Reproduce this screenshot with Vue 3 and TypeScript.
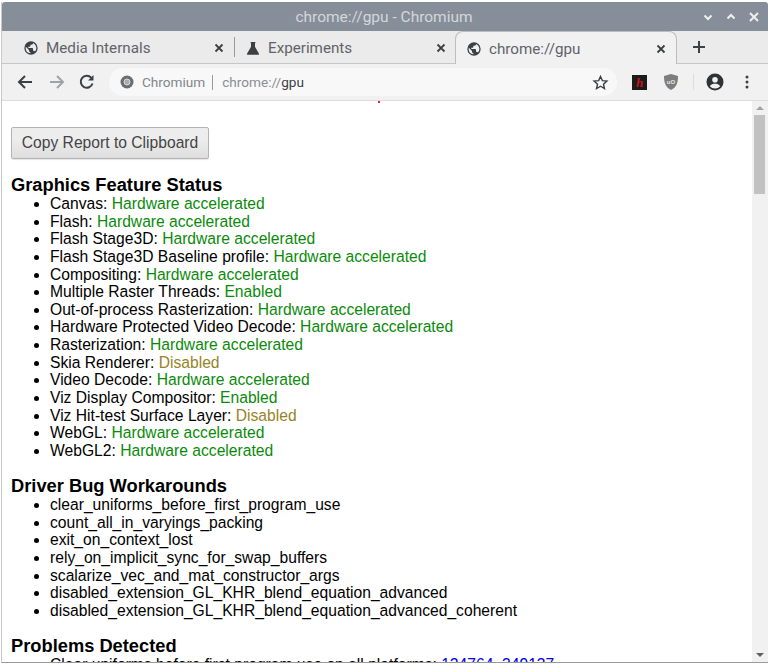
<script setup lang="ts">
interface Feature { name: string; status: string; off?: boolean }
const features: Feature[] = [
  { name: 'Canvas', status: 'Hardware accelerated' },
  { name: 'Flash', status: 'Hardware accelerated' },
  { name: 'Flash Stage3D', status: 'Hardware accelerated' },
  { name: 'Flash Stage3D Baseline profile', status: 'Hardware accelerated' },
  { name: 'Compositing', status: 'Hardware accelerated' },
  { name: 'Multiple Raster Threads', status: 'Enabled' },
  { name: 'Out-of-process Rasterization', status: 'Hardware accelerated' },
  { name: 'Hardware Protected Video Decode', status: 'Hardware accelerated' },
  { name: 'Rasterization', status: 'Hardware accelerated' },
  { name: 'Skia Renderer', status: 'Disabled', off: true },
  { name: 'Video Decode', status: 'Hardware accelerated' },
  { name: 'Viz Display Compositor', status: 'Enabled' },
  { name: 'Viz Hit-test Surface Layer', status: 'Disabled', off: true },
  { name: 'WebGL', status: 'Hardware accelerated' },
  { name: 'WebGL2', status: 'Hardware accelerated' },
]
const workarounds = [
  'clear_uniforms_before_first_program_use',
  'count_all_in_varyings_packing',
  'exit_on_context_lost',
  'rely_on_implicit_sync_for_swap_buffers',
  'scalarize_vec_and_mat_constructor_args',
  'disabled_extension_GL_KHR_blend_equation_advanced',
  'disabled_extension_GL_KHR_blend_equation_advanced_coherent',
]
const tabs = [
  { title: 'Media Internals', icon: 'globe' },
  { title: 'Experiments', icon: 'flask' },
  { title: 'chrome://gpu', icon: 'globe', active: true },
]
</script>

<template>
  <div class="screen">
    <div class="window">
      <header class="titlebar">
        <span class="title">chrome://gpu - Chromium</span>
        <div class="winbtns">
          <svg width="14" height="14" viewBox="0 0 14 14"><path d="M3.5 5.5 7 9l3.500-3.500" class="wb" /></svg>
          <svg width="14" height="14" viewBox="0 0 14 14"><path d="M3.500 8.500 7 5l3.500 3.500" class="wb" /></svg>
          <svg width="14" height="14" viewBox="0 0 14 14"><path d="M3 3l8 8M11 3l-8 8" class="wb" /></svg>
        </div>
      </header>

      <div class="tabstrip">
        <div v-for="t in tabs" :key="t.title" class="tab" :class="{ active: t.active }">
          <svg v-if="t.icon === 'globe'" class="favicon" width="16" height="16" viewBox="0 0 24 24">
            <path fill="#3c4043" d="M12 2a10 10 0 1 0 0 20 10 10 0 0 0 0-20zM4 12c0-.6.1-1.200.2-1.800L9 15v1c0 1.100.9 2 2 2v2a8 8 0 0 1-7-8zm13.900 5.400A2 2 0 0 0 16 16h-1v-3c0-.6-.4-1-1-1H8v-2h2c.6 0 1-.4 1-1V7h2c1.100 0 2-.9 2-2v-.4a8 8 0 0 1 2.900 12.800z" />
          </svg>
          <svg v-else class="favicon" width="16" height="16" viewBox="0 0 24 24">
            <path fill="#3c4043" d="M8.500 3h7v2H15v5l6 10.500c.4.700 0 1.500-.9 1.500H3.900c-.9 0-1.300-.8-.9-1.500L9 10V5h-.5z" />
          </svg>
          <span class="tabtitle">{{ t.title }}</span>
          <svg class="tabclose" width="10" height="10" viewBox="0 0 10 10"><path d="M1.500 1.500l7 7M8.500 1.500l-7 7" stroke="#3c4043" stroke-width="1.800" fill="none" /></svg>
        </div>
        <svg class="plus" width="14" height="14" viewBox="0 0 14 14"><path d="M7 1v12M1 7h12" stroke="#3c4043" stroke-width="2" fill="none" /></svg>
      </div>

      <div class="toolbar">
        <svg class="nav first" width="18" height="18" viewBox="0 0 18 18"><path d="M16 9H3M9 3 3 9l6 6" stroke="#3c4043" stroke-width="2" fill="none" /></svg>
        <svg class="nav" width="18" height="18" viewBox="0 0 18 18"><path d="M2 9h13M9 3l6 6-6 6" stroke="#a0a3a6" stroke-width="2" fill="none" /></svg>
        <svg class="nav reload" width="18" height="18" viewBox="0 0 18 18"><path d="M14.500 10.500A6 6 0 1 1 13.200 4.700" stroke="#3c4043" stroke-width="2" fill="none" /><path d="M15.500 2v5.500H10z" fill="#3c4043" /></svg>
        <div class="omnibox">
          <svg class="chromeicon" width="14" height="14" viewBox="0 0 14 14"><circle cx="7" cy="7" r="6.500" fill="#6b6e71" /><circle cx="7" cy="7" r="3" fill="#a9abad" stroke="#e8e8e8" stroke-width=".8" /></svg>
          <span class="origin">Chromium</span>
          <span class="pipe"></span>
          <span class="url">chrome://<b>gpu</b></span>
          <svg class="star" width="17" height="17" viewBox="0 0 24 24"><path d="M12 3.500l2.600 5.900 6.400.6-4.800 4.300 1.400 6.300L12 17.300l-5.600 3.300 1.400-6.300L3 10l6.400-.6z" stroke="#3c4043" stroke-width="2" fill="none" /></svg>
        </div>
        <div class="ext-h"><span>h</span></div>
        <svg class="ublock" width="16" height="18" viewBox="0 0 16 18"><path d="M8 1l7 2c0 6-1 11-7 14C2 14 1 9 1 3z" fill="#7d7d7d" /><text x="8" y="10.500" text-anchor="middle" class="ub">uO</text></svg>
        <span class="sep"></span>
        <svg class="avatar" width="18" height="18" viewBox="0 0 18 18"><circle cx="9" cy="9" r="8.500" fill="#2f3336" /><circle cx="9" cy="6.800" r="2.800" fill="#f1f1f1" /><path d="M3.800 13.200C5 11.300 7 10.800 9 10.800s4 .5 5.200 2.400A7 7 0 0 1 9 15.500a7 7 0 0 1-5.200-2.300z" fill="#f1f1f1" /></svg>
        <svg class="dots" width="4" height="14" viewBox="0 0 4 14"><circle cx="2" cy="2" r="1.500" fill="#3c4043" /><circle cx="2" cy="7" r="1.500" fill="#3c4043" /><circle cx="2" cy="12" r="1.500" fill="#3c4043" /></svg>
      </div>

      <div class="viewport">
        <main class="page">
          <i class="reddot"></i>
          <button class="copy" type="button">Copy Report to Clipboard</button>
          <h3>Graphics Feature Status</h3>
          <ul>
            <li v-for="f in features" :key="f.name">{{ f.name }}: <span :class="f.off ? 'off' : 'on'">{{ f.status }}</span></li>
          </ul>
          <h3>Driver Bug Workarounds</h3>
          <ul>
            <li v-for="w in workarounds" :key="w">{{ w }}</li>
          </ul>
          <h3>Problems Detected</h3>
          <ul>
            <li>Clear uniforms before first program use on all platforms: <a>124764</a>, <a>349137</a></li>
          </ul>
        </main>
        <aside class="scrollbar">
          <span class="arrow up"></span>
          <span class="thumb"></span>
          <span class="arrow down"></span>
        </aside>
      </div>
    </div>
  </div>
</template>

<style scoped>
.screen { width: 768px; height: 665px; background: #fff; padding: 2px 0 2px 1px; box-sizing: border-box; overflow: hidden; }
.window { height: 100%; display: flex; flex-direction: column; border-bottom: 1px solid #9a9a9a; border-left: 1px solid #c9c9c9; box-sizing: border-box; }
.titlebar { flex: 0 0 29px; background: #868f99; border-radius: 3px 3px 0 0; position: relative; display: flex; align-items: center; justify-content: center; }
.title { font: 15.500px Roboto, sans-serif; color: #d3d7db; margin-left: -2px; }
.winbtns { position: absolute; right: 7px; top: 8px; display: flex; gap: 9px; }
.wb { stroke: #eef0f2; stroke-width: 2; fill: none; }
.tabstrip { flex: 0 0 33px; background: #ebebeb; border-bottom: 1px solid #c6c6c6; display: flex; align-items: stretch; padding-left: 10px; box-sizing: border-box; }
.tab { width: 222px; box-sizing: border-box; display: flex; align-items: center; padding: 2px 10px 0 11px; position: relative; }
.tab + .tab:not(.active)::before { content: ""; position: absolute; left: 0; top: 6px; bottom: 6px; width: 1px; background: #9b9b9b; }
.tab.active { background: #f1f1f1; border: 1px solid #bdbdbd; border-bottom: none; border-radius: 8px 8px 0 0; margin-bottom: -1px; margin-left: -1px; height: 33px; padding-left: 10px; }
.favicon { margin-right: 7px; flex: none; }
.tabtitle { font: 15.200px Roboto, sans-serif; color: #5f6368; flex: 1; white-space: nowrap; }
.plus { align-self: center; margin-left: 15px; }
.tabclose { flex: none; }
.toolbar { flex: 0 0 37px; background: #f1f1f1; border-bottom: 1px solid #dcdcdc; display: flex; align-items: center; box-sizing: border-box; }
.nav { margin-left: 14px; flex: none; }
.nav.reload { margin-left: 12px; }
.omnibox { margin-left: 13px; width: 508px; height: 28px; background: #f8f8f8; border-radius: 14px; display: flex; align-items: center; padding: 0 8px 0 11px; box-sizing: border-box; font: 13.600px Roboto, sans-serif; }
.chromeicon { margin-right: 8px; }
.origin { color: #80868b; }
.pipe { width: 1px; height: 15px; background: #999; margin: 0 9px 0 7px; }
.url { color: #8a8d91; flex: 1; }
.url b { font-weight: 400; color: #3c4043; }
.star { flex: none; }
.ext-h { margin-left: 15px; width: 15px; height: 15px; background: #1c1c1c; display: flex; align-items: center; justify-content: center; }
.ext-h span { font: italic 700 13px "Liberation Serif", serif; color: #c8141a; line-height: 15px; }
.ublock { margin-left: 16px; }
.ub { font: 700 6px "Liberation Sans", sans-serif; fill: #e6e6e6; }
.sep { width: 1px; height: 16px; background: #dcdcdc; margin-left: 14px; }
.avatar { margin-left: 12px; }
.dots { margin-left: 21px; }
.viewport { flex: 1; min-height: 0; display: flex; background: #fff; }
.page { flex: 1; min-width: 0; overflow: hidden; padding: 26px 0 0 9px; position: relative; font: 15.650px/17.640px "Liberation Sans", Arial, sans-serif; color: #000; }
.reddot { position: absolute; left: 376px; top: 0; width: 2px; height: 2px; background: #e0204a; }
.copy { display: block; width: 198px; height: 32px; padding: 0; font: 15.650px "Liberation Sans", Arial, sans-serif; color: #444; background: linear-gradient(#ededed, #ededed 38%, #dedede); border: 1px solid #b4b4b4; border-radius: 2px; box-shadow: 0 1px 1px rgba(0,0,0,.1); }
h3 { margin: 15px 0 0; font: 700 18.300px/21px "Liberation Sans", Arial, sans-serif; }
ul { margin: 0 0 15.500px; padding: 0 0 0 39px; list-style: disc; }
.on { color: #0a8a0a; }
.off { color: #978328; }
a { color: #0000ee; }
.scrollbar { flex: 0 0 16px; background: #f1f1f1; position: relative; }
.thumb { position: absolute; left: 2px; right: 0; top: 14px; height: 79px; width: 11px; background: #c1c1c1; }
.arrow { position: absolute; left: 4px; border-left: 4px solid transparent; border-right: 4px solid transparent; }
.arrow.up { top: 5px; border-bottom: 4px solid #a3a3a3; }
.arrow.down { bottom: 5px; border-top: 4px solid #606060; }
</style>
